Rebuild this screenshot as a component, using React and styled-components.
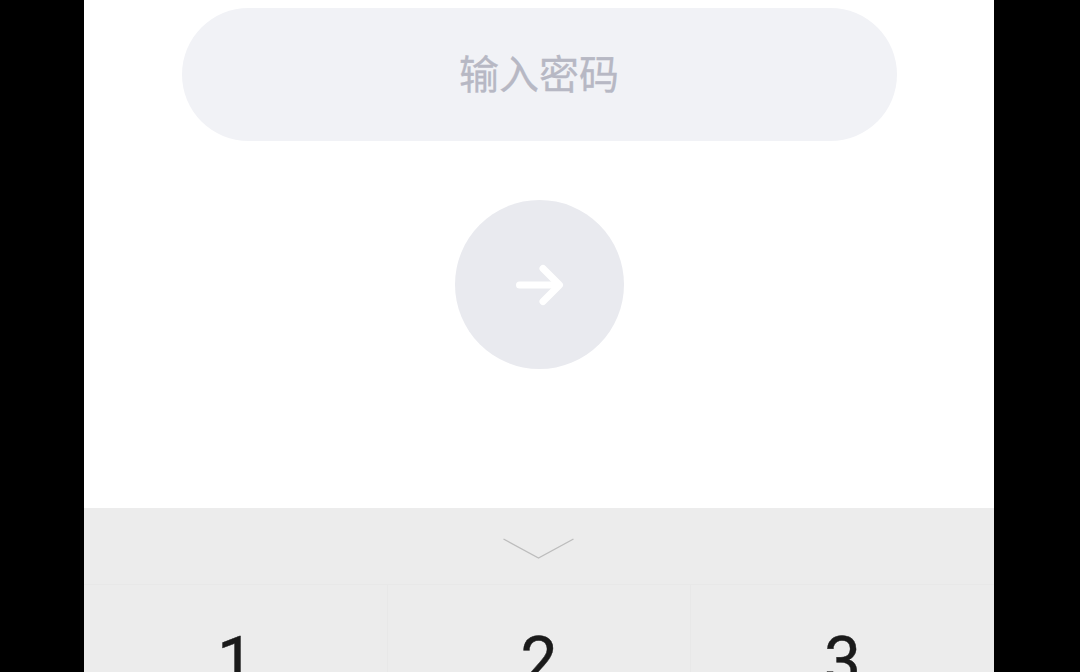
import styled, { createGlobalStyle } from 'styled-components'

const Global = createGlobalStyle`
    html, body {
        margin: 0;
        padding: 0;
        background: #000;
        overflow: hidden;
    }
`

const Screen = styled.div`
    width: 910px;
    height: 672px;
    margin-left: 84px;
    background: #fff;
    display: flex;
    flex-direction: column;
    overflow: hidden;
    font-family: "Roboto", "Noto Sans CJK SC", sans-serif;
`

const Form = styled.div`
    height: 508px;
    flex-shrink: 0;
    padding-top: 8px;
    box-sizing: border-box;
    display: flex;
    flex-direction: column;
    align-items: center;
`

const PasswordInput = styled.div`
    width: 715px;
    height: 133px;
    border-radius: 67px;
    background: #f1f2f6;
    color: #b7b8c4;
    font-family: "Noto Sans CJK SC", sans-serif;
    font-size: 40px;
    -webkit-text-stroke: 0.3px #b7b8c4;
    line-height: 129px;
    text-align: center;
`

const SubmitButton = styled.div`
    width: 169px;
    height: 169px;
    margin-top: 59px;
    border-radius: 50%;
    background: #e9eaef;
    display: flex;
    align-items: center;
    justify-content: center;
`

const Keyboard = styled.div`
    flex: 1;
    background: #ececec;
`

const KeyboardHandle = styled.div`
    height: 77px;
    display: flex;
    justify-content: center;
    align-items: flex-start;
    padding-top: 30px;
    box-sizing: border-box;
    border-bottom: 1px solid #e8e8e8;
`

const KeyRow = styled.div`
    display: grid;
    grid-template-columns: 303px 303px 304px;
`

const Key = styled.div`
    height: 120px;
    display: flex;
    justify-content: center;
    padding-top: 42px;
    box-sizing: border-box;
    font-size: 66px;
    line-height: 70px;
    color: #1a1a1a;
    -webkit-text-stroke: 0.4px #1a1a1a;
    border-left: ${props => (props.$first ? 'none' : '1px solid #e8e8e8')};
`

const App = () => {
    return (
        <>
            <Global />
            <Screen>
                <Form>
                    <PasswordInput>输入密码</PasswordInput>
                    <SubmitButton>
                        <svg width="50" height="44" viewBox="0 0 50 44" fill="none" stroke="#fff" strokeWidth="7" strokeLinecap="round" strokeLinejoin="round">
                            <path d="M5.5 22H44" />
                            <path d="M29 5.5L45.5 22L29 38.5" />
                        </svg>
                    </SubmitButton>
                </Form>
                <Keyboard>
                    <KeyboardHandle>
                        <svg width="72" height="22" viewBox="0 0 72 22" fill="none" stroke="#bdbdbd" strokeWidth="1.4">
                            <path d="M0.5 1L35.5 20L70.5 1" />
                        </svg>
                    </KeyboardHandle>
                    <KeyRow>
                        <Key $first>1</Key>
                        <Key>2</Key>
                        <Key>3</Key>
                    </KeyRow>
                </Keyboard>
            </Screen>
        </>
    )
}

export default App
